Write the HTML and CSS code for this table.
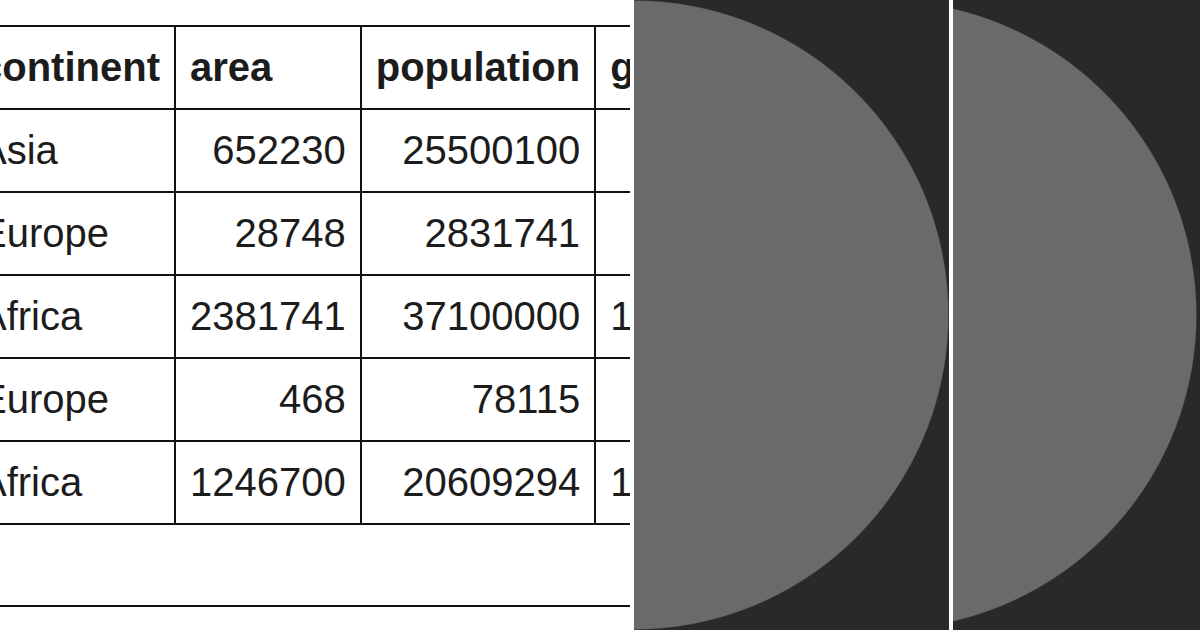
FILE: index.html
```html
<!DOCTYPE html>
<html>
<head>
<meta charset="utf-8">
<link rel="stylesheet" href="styles.css">
</head>
<body>
<div class="page">
  <div class="doc">
    <table class="data">
      <thead>
        <tr><th>continent</th><th>area</th><th>population</th><th>gdp</th></tr>
      </thead>
      <tbody>
        <tr><td>Asia</td><td class="num">652230</td><td class="num">25500100</td><td class="num">20343</td></tr>
        <tr><td>Europe</td><td class="num">28748</td><td class="num">2831741</td><td class="num">12800</td></tr>
        <tr><td>Africa</td><td class="num">2381741</td><td class="num">37100000</td><td class="num">188681</td></tr>
        <tr><td>Europe</td><td class="num">468</td><td class="num">78115</td><td class="num">3327</td></tr>
        <tr><td>Africa</td><td class="num">1246700</td><td class="num">20609294</td><td class="num">100990</td></tr>
      </tbody>
    </table>
    <div class="rule"></div>
  </div>
  <div class="slide slide-first"></div>
  <div class="slide slide-second"></div>
</div>
</body>
</html>
```

FILE: styles.css
```css
html, body {
  margin: 0;
  padding: 0;
  background: #ffffff;
}

.page {
  display: flex;
  gap: 4px;
  width: 1200px;
  height: 630px;
  overflow: hidden;
}

.doc {
  width: 630px;
  flex: 0 0 630px;
  overflow: hidden;
  padding-top: 25px;
  box-sizing: border-box;
}

.data {
  border-collapse: collapse;
  margin-left: -36px;
  font-family: "Liberation Sans", Arial, sans-serif;
  font-size: 40px;
  color: #1c1c1c;
}

.data th,
.data td {
  border: 2px solid #111111;
  line-height: 81px;
  padding: 0 14px;
  white-space: nowrap;
  text-align: left;
}

.data th {
  font-weight: bold;
}

.data td.num {
  text-align: right;
}

.rule {
  width: 630px;
  margin-top: 80px;
  border-top: 2px solid #111111;
}

.slide {
  height: 630px;
  background-color: #292929;
}

.slide-first {
  flex: 0 0 315px;
  background-image: radial-gradient(circle 315px at 0 315px, #6a6a6a 99.6%, #292929 100%);
}

.slide-second {
  flex: 1 1 auto;
  background-image: radial-gradient(circle 315px at -71px 315px, #6a6a6a 99.6%, #292929 100%);
}
```
